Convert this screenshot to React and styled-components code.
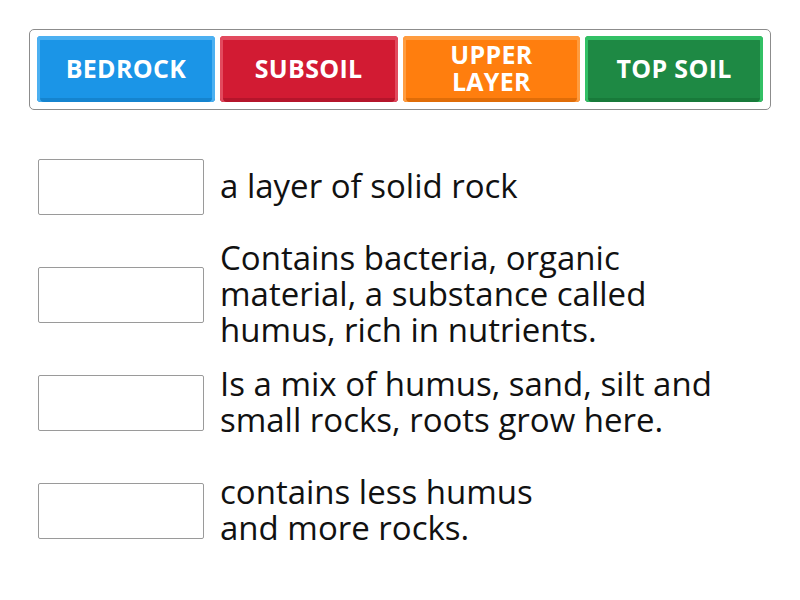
import React from 'react'
import styled, { createGlobalStyle } from 'styled-components'

const GlobalStyle = createGlobalStyle`
  html, body {
    margin: 0;
    padding: 0;
    background: #fff;
  }
  body {
    font-family: 'Open Sans', 'Noto Sans', sans-serif;
  }
`

const Page = styled.div`
  width: 800px;
  height: 600px;
  padding: 29px 29px 0;
  box-sizing: border-box;
`

const Tray = styled.div`
  display: grid;
  grid-template-columns: repeat(4, 1fr);
  gap: 5px;
  padding: 6px 7px 7px;
  border: 1px solid #8c8c8c;
  border-radius: 5px;
`

const palette = {
  blue: { face: '#1b95e7', rim: '#4cb0f1', low: '#1584cf' },
  red: { face: '#d21b33', rim: '#e24a5e', low: '#b5152b' },
  orange: { face: '#ff7e0e', rim: '#ff9c3f', low: '#e06d08' },
  green: { face: '#1e8944', rim: '#32c065', low: '#187a3a' },
}

const Tile = styled.div`
  height: 66px;
  box-sizing: border-box;
  display: flex;
  align-items: center;
  justify-content: center;
  text-align: center;
  border-radius: 4px;
  background: ${(p) => palette[p.$tone].face};
  box-shadow:
    inset 0 4px 0 ${(p) => palette[p.$tone].rim},
    inset 3px 0 0 ${(p) => palette[p.$tone].rim},
    inset -3px 0 0 ${(p) => palette[p.$tone].rim},
    inset 0 -4px 0 ${(p) => palette[p.$tone].low};
  color: #fff;
  font-weight: 700;
  font-size: 25px;
  letter-spacing: 0.3px;
  line-height: 27px;
  padding-bottom: 2px;
`

const List = styled.div`
  margin-top: 23px;
  padding-left: 9px;
  display: flex;
  flex-direction: column;
`

const Row = styled.div`
  height: 108px;
  display: flex;
  align-items: center;
  gap: 16px;
`

const Slot = styled.div`
  width: 166px;
  height: 56px;
  flex: none;
  box-sizing: border-box;
  border: 1px solid #9a9a9a;
  border-radius: 2px;
  background: #fff;
`

const Clue = styled.div`
  max-width: 510px;
  font-size: 33px;
  line-height: 36px;
  color: #111;
  margin-top: -3px;
`

const tiles = [
  { tone: 'blue', label: 'BEDROCK' },
  { tone: 'red', label: 'SUBSOIL' },
  { tone: 'orange', label: <>UPPER<br />LAYER</> },
  { tone: 'green', label: 'TOP SOIL' },
]

const clues = [
  'a layer of solid rock',
  'Contains bacteria, organic material, a substance called humus, rich in nutrients.',
  'Is a mix of humus, sand, silt and small rocks, roots grow here.',
  <>contains less humus<br />and more rocks.</>,
]

export default function App() {
  return (
    <Page>
      <GlobalStyle />
      <Tray>
        {tiles.map((t, i) => (
          <Tile key={i} $tone={t.tone}>{t.label}</Tile>
        ))}
      </Tray>
      <List>
        {clues.map((c, i) => (
          <Row key={i}>
            <Slot />
            <Clue>{c}</Clue>
          </Row>
        ))}
      </List>
    </Page>
  )
}
